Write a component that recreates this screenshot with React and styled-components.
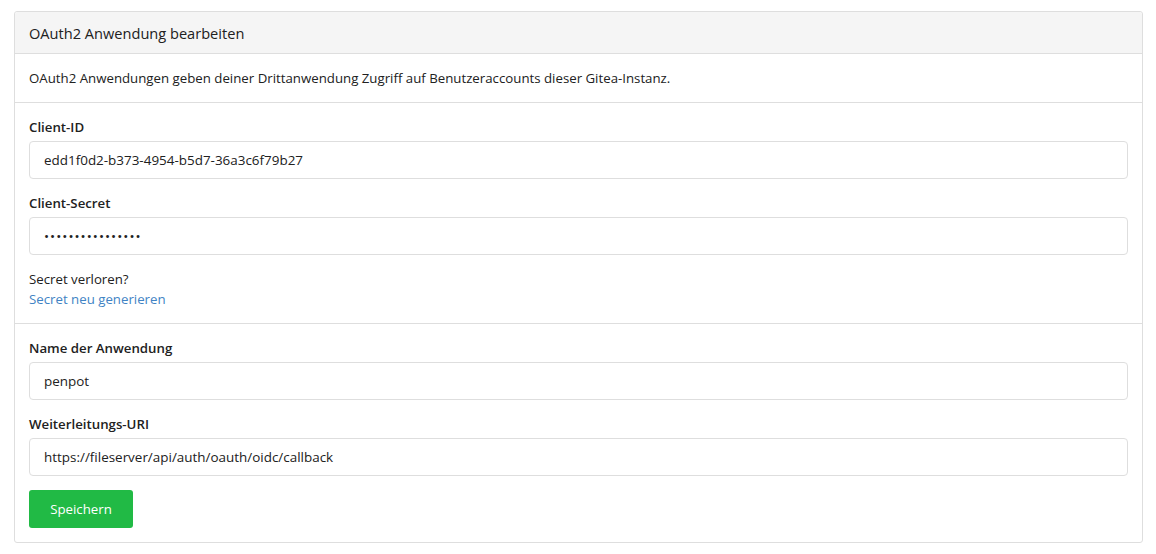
import React from "react";
import styled, { createGlobalStyle } from "styled-components";

const Global = createGlobalStyle`
  html, body { margin: 0; padding: 0; background: #fff; }
  body { font-family: "Open Sans", "Noto Sans", sans-serif; color: #212121; font-size: 13.25px; }
  * { box-sizing: border-box; }
`;

const Page = styled.div`
  padding: 11px 13px 11px 14px;
`;

const Panel = styled.div`
  border: 1px solid #dedede;
  border-radius: 3px;
  background: #fff;
`;

const Header = styled.div`
  background: #f5f5f5;
  border-bottom: 1px solid #dedede;
  height: 42px;
  padding: 0 14px;
  display: flex;
  align-items: center;
  font-size: 14.6px;
  font-weight: 500;
  color: #212121;
  border-radius: 3px 3px 0 0;
`;

const Section = styled.div`
  padding: 16px 14px 14px;
  border-bottom: ${(p) => (p.$last ? "none" : "1px solid #dedede")};
  display: flex;
  flex-direction: column;
`;

const Desc = styled.div`
  height: 49px;
  padding: 0 14px;
  display: flex;
  align-items: center;
  border-bottom: 1px solid #dedede;
`;

const Field = styled.div`
  display: flex;
  flex-direction: column;
  margin-bottom: ${(p) => p.$mb || "16px"};
`;

const Label = styled.label`
  font-weight: 600;
  line-height: 16px;
  margin-bottom: 6px;
`;

const Input = styled.input`
  height: 38px;
  border: 1px solid #dedede;
  border-radius: 4px;
  padding: 0 14px;
  font-family: inherit;
  font-size: 13.45px;
  color: #212121;
  outline: none;
  width: 100%;
  background: #fff;
  letter-spacing: ${(p) => (p.type === "password" ? "1.05px" : "normal")};
`;

const Text = styled.div`
  line-height: 20px;
`;

const Link = styled.a`
  line-height: 20px;
  color: #4183c4;
  text-decoration: none;
`;

const Button = styled.button`
  align-self: flex-start;
  height: 38px;
  width: 104px;
  background: #21ba45;
  color: #fff;
  border: none;
  border-radius: 3px;
  font-family: inherit;
  font-size: 13.25px;
  font-weight: 500;
  margin-top: 14px;
`;

export default function App() {
  return (
    <>
      <Global />
      <Page>
        <Panel>
          <Header>OAuth2 Anwendung bearbeiten</Header>
          <Desc>
            OAuth2 Anwendungen geben deiner Drittanwendung Zugriff auf Benutzeraccounts dieser Gitea-Instanz.
          </Desc>
          <Section>
            <Field>
              <Label>Client-ID</Label>
              <Input readOnly value="edd1f0d2-b373-4954-b5d7-36a3c6f79b27" />
            </Field>
            <Field $mb="14px">
              <Label>Client-Secret</Label>
              <Input readOnly type="password" value="****************" />
            </Field>
            <Text>Secret verloren?</Text>
            <Link href="#">Secret neu generieren</Link>
          </Section>
          <Section $last>
            <Field>
              <Label>Name der Anwendung</Label>
              <Input readOnly value="penpot" />
            </Field>
            <Field $mb="0">
              <Label>Weiterleitungs-URI</Label>
              <Input readOnly value="https://fileserver/api/auth/oauth/oidc/callback" />
            </Field>
            <Button>Speichern</Button>
          </Section>
        </Panel>
      </Page>
    </>
  );
}
